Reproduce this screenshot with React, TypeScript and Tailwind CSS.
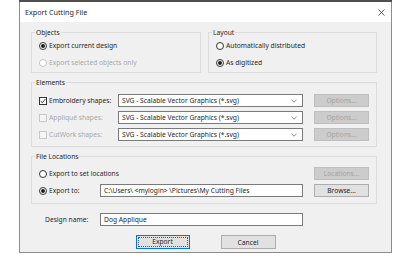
import React from "react";

const font = "font-['Segoe_UI','Noto_Sans',sans-serif]";

function Radio({ checked, disabled }: { checked?: boolean; disabled?: boolean }) {
  return (
    <span
      className={`flex h-[8px] w-[8px] shrink-0 items-center justify-center rounded-full border bg-white ${
        disabled ? "border-[#c4c4c4] bg-[#f4f4f4]" : "border-[#333333]"
      }`}
    >
      {checked && <span className="h-[4px] w-[4px] rounded-full bg-[#1e1e1e]" />}
    </span>
  );
}

function Check({ checked, disabled }: { checked?: boolean; disabled?: boolean }) {
  return (
    <span
      className={`flex h-[8px] w-[8px] shrink-0 items-center justify-center border ${
        disabled ? "border-[#c8c8c8] bg-[#f4f4f4]" : "border-[#333333] bg-white"
      }`}
    >
      {checked && (
        <svg width="6" height="6" viewBox="0 0 6 6">
          <path d="M0.6 3.1 L2.3 4.7 L5.5 0.9" fill="none" stroke="#1e1e1e" strokeWidth="0.9" />
        </svg>
      )}
    </span>
  );
}

function Group({ label, className, children }: { label: string; className?: string; children: React.ReactNode }) {
  return (
    <div className={`flex flex-col border border-[#dcdcdc] ${className ?? ""}`}>
      <span className="-mt-[5px] ml-[3px] w-fit bg-[#f0f0f0] px-[1px] leading-[9px]">{label}</span>
      {children}
    </div>
  );
}

function Combo() {
  return (
    <div className="flex h-[13px] w-[185px] items-center justify-between border border-[#7a7a7a] bg-white pl-[3px] pr-[5px]">
      <span>SVG - Scalable Vector Graphics (*.svg)</span>
      <svg width="6" height="4" viewBox="0 0 6 4">
        <path d="M0.5 0.8 L3 3.2 L5.5 0.8" fill="none" stroke="#707070" strokeWidth="0.8" />
      </svg>
    </div>
  );
}

function Btn({ label, disabled, className }: { label: string; disabled?: boolean; className?: string }) {
  return (
    <div
      className={`flex h-[13px] w-[55px] items-center justify-center border ${
        disabled ? "border-[#bfbfbf] bg-[#cccccc] text-[#a3a3a3]" : "border-[#adadad] bg-[#e1e1e1]"
      } ${className ?? ""}`}
    >
      {label}
    </div>
  );
}

export default function App() {
  const shapes = [
    { label: "Embroidery shapes:", checked: true, disabled: false },
    { label: "Appliqué shapes:", checked: false, disabled: true },
    { label: "CutWork shapes:", checked: false, disabled: true },
  ];

  return (
    <div className={`h-[266px] w-[408px] bg-white text-[6.7px] leading-[9px] text-[#262626] ${font}`}>
      <div className="ml-[19px] flex h-[253px] w-[373px] flex-col border-x border-b border-[#8c8c8c] bg-[#f0f0f0]">
        <div className="-mx-px h-[2px] bg-[#4f4f4f]" />
        <div className="flex h-[20px] items-center justify-between bg-white pl-[5px] pr-[6px]">
          <span className="text-[7.2px]">Export Cutting File</span>
          <svg width="7" height="7" viewBox="0 0 7 7">
            <path d="M0.5 0.5 L6.5 6.5 M6.5 0.5 L0.5 6.5" stroke="#333333" strokeWidth="0.8" />
          </svg>
        </div>

        <div className="flex flex-col pl-[11px] pr-[14px] pt-[10px]">
          <div className="flex gap-[7px]">
            <Group label="Objects" className="h-[41px] w-[170px]">
              <div className="flex h-[17px] items-center gap-[2px] pl-[7px]">
                <Radio checked />
                <span>Export current design</span>
              </div>
              <div className="flex h-[17px] items-center gap-[2px] pl-[7px] text-[#a8a8a8]">
                <Radio disabled />
                <span>Export selected objects only</span>
              </div>
            </Group>
            <Group label="Layout" className="h-[41px] flex-1">
              <div className="flex h-[17px] items-center gap-[2px] pl-[7px]">
                <Radio />
                <span>Automatically distributed</span>
              </div>
              <div className="flex h-[17px] items-center gap-[2px] pl-[7px]">
                <Radio checked />
                <span>As digitized</span>
              </div>
            </Group>
          </div>

          <Group label="Elements" className="mt-[9px] h-[65px]">
            <div className="mt-[5px] flex flex-col">
              {shapes.map((s) => (
                <div key={s.label} className="flex h-[17px] items-center pl-[7px]">
                  <div className={`flex w-[79px] items-center gap-[2px] ${s.disabled ? "text-[#a8a8a8]" : ""}`}>
                    <Check checked={s.checked} disabled={s.disabled} />
                    <span>{s.label}</span>
                  </div>
                  <Combo />
                  <Btn label="Options..." disabled className="ml-[11px]" />
                </div>
              ))}
            </div>
          </Group>

          <Group label="File Locations" className="mt-[9px] h-[48px]">
            <div className="mt-[4px] flex flex-col">
              <div className="flex h-[17px] items-center pl-[7px]">
                <div className="flex w-[275px] items-center gap-[2px]">
                  <Radio />
                  <span>Export to set locations</span>
                </div>
                <Btn label="Locations..." disabled />
              </div>
              <div className="flex h-[17px] items-center pl-[7px]">
                <div className="flex w-[61px] items-center gap-[2px]">
                  <Radio checked />
                  <span>Export to:</span>
                </div>
                <div className="flex h-[13px] w-[203px] items-center border border-[#7a7a7a] bg-white pl-[3px]">
                  {"C:\\Users\\ <mylogin> \\Pictures\\My Cutting Files"}
                </div>
                <Btn label="Browse..." className="ml-[11px]" />
              </div>
            </div>
          </Group>

          <div className="mt-[9px] flex h-[13px] items-center">
            <span className="w-[69px] pl-[14px]">Design name:</span>
            <div className="flex h-[13px] w-[203px] items-center border border-[#7a7a7a] bg-white pl-[3px]">
              Dog Applique
            </div>
          </div>

          <div className="mt-[9px] flex justify-center gap-[31px] pl-[3px]">
            <div className="flex h-[14px] w-[54px] items-center justify-center border border-[#0078d7] bg-[#e1e1e1] p-px">
              <div className="flex h-full w-full items-center justify-center border border-dotted border-[#555555] leading-none">
                Export
              </div>
            </div>
            <div className="flex h-[14px] w-[55px] items-center justify-center border border-[#adadad] bg-[#e1e1e1]">
              Cancel
            </div>
          </div>
        </div>
      </div>
    </div>
  );
}
